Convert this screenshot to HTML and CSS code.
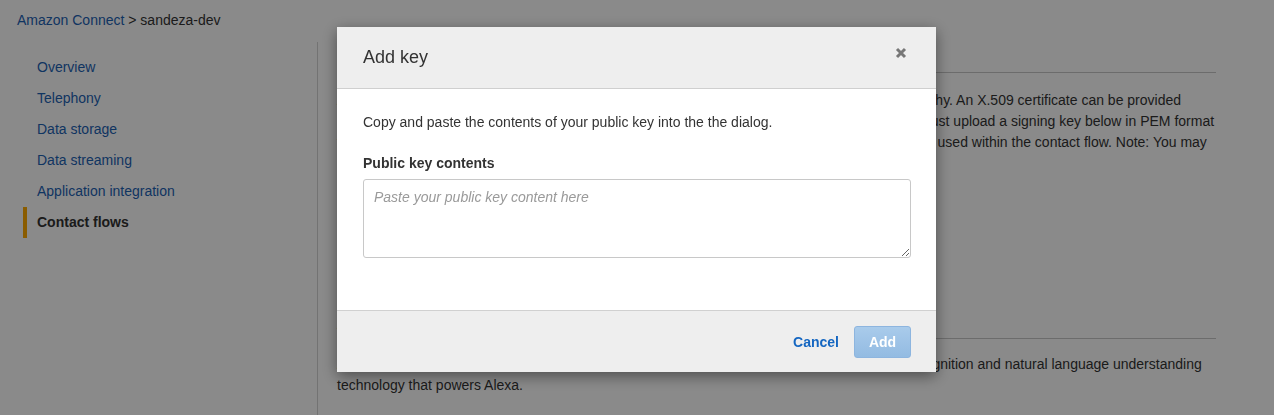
FILE: index.html
```html
<!DOCTYPE html>
<html lang="en">
<head>
<meta charset="utf-8">
<title>Contact flows - Amazon Connect</title>
<link rel="stylesheet" href="styles.css">
</head>
<body>
<div class="page">
  <div class="breadcrumb"><a href="#" class="link">Amazon Connect</a> &gt; sandeza-dev</div>
  <div class="layout">
    <nav class="sidebar">
      <ul class="nav">
        <li class="nav-item"><a href="#" class="link">Overview</a></li>
        <li class="nav-item"><a href="#" class="link">Telephony</a></li>
        <li class="nav-item"><a href="#" class="link">Data storage</a></li>
        <li class="nav-item"><a href="#" class="link">Data streaming</a></li>
        <li class="nav-item"><a href="#" class="link">Application integration</a></li>
        <li class="nav-item active">Contact flows</li>
      </ul>
    </nav>
    <main class="main">
      <h2 class="section-title">Contact flow security keys</h2>
      <p class="para para-first">Amazon Connect may encrypt sensitive customer inputs using asymmetric public-key crypto<span>graphy. An X.509 certificate can be provided</span><br>by Amazon Connect to encrypt sensitive customer data collected in the contact flow. You then mu<span>st upload a signing key below in PEM format</span><br>to enable encryption and decryption. The key ID of the uploaded signing key can then be directly <span>used within the contact flow. Note: You may</span></p>
      <div class="keys">
        <button class="btn-secondary">Add key</button>
        <div class="key-table">
          <div class="key-row head"><span>Key ID</span><span>Created</span></div>
          <div class="key-row"><span>No keys</span><span></span></div>
        </div>
      </div>
      <h2 class="section-title">Amazon Lex</h2>
      <p class="para">Amazon Lex enables you to build chatbots using the same deep learning automatic speech recog<span>nition and natural language understanding</span><br>technology that powers Alexa.</p>
    </main>
  </div>
</div>

<div class="overlay"></div>

<div class="modal" role="dialog" aria-labelledby="modal-title">
  <div class="modal-header">
    <h3 class="modal-title" id="modal-title">Add key</h3>
    <button class="close" aria-label="Close">
      <svg width="12" height="12" viewBox="0 0 12 12"><path d="M2 2 L10 10 M10 2 L2 10" stroke="#777" stroke-width="3" stroke-linecap="butt" fill="none"/></svg>
    </button>
  </div>
  <div class="modal-body">
    <p class="intro">Copy and paste the contents of your public key into the the dialog.</p>
    <label class="field-label" for="keytext">Public key contents</label>
    <textarea id="keytext" class="textarea" placeholder="Paste your public key content here"></textarea>
  </div>
  <div class="modal-footer">
    <a href="#" class="cancel">Cancel</a>
    <button class="btn-primary">Add</button>
  </div>
</div>
</body>
</html>
```
FILE: styles.css
```css
* { box-sizing: border-box; }
html, body { margin: 0; padding: 0; }
body {
  font-family: "Liberation Sans", Arial, Helvetica, sans-serif;
  font-size: 14px;
  color: #333;
  background: #fff;
  overflow: hidden;
}
.link { color: #1d62b4; text-decoration: none; }

.breadcrumb {
  padding: 10px 17px;
  line-height: 20px;
  height: 42px;
}

.layout {
  display: flex;
  min-height: calc(100vh - 42px);
}
.sidebar {
  width: 318px;
  flex: none;
  border-right: 1px solid #d4d4d4;
  padding-top: 10px;
}
.nav { list-style: none; margin: 0; padding: 0 0 0 23px; }
.nav-item {
  line-height: 31px;
  height: 31px;
  padding-left: 10px;
  border-left: 4px solid transparent;
}
.nav-item.active {
  border-left-color: #ffaa00;
  font-weight: bold;
  color: #333;
}

.main {
  flex: 1;
  padding: 0 58px 0 19px;
}
.section-title {
  margin: 0;
  font-size: 18px;
  font-weight: normal;
  line-height: 22px;
  padding: 4px 0 4px;
  border-bottom: 1px solid #c8c8c8;
}
.para {
  margin: 15px 0 0;
  line-height: 21px;
  white-space: nowrap;
}
.para-first { margin-top: 17px; }
.keys { margin: 20px 0 25px; height: 110px; }
.btn-secondary {
  font: inherit;
  height: 32px;
  padding: 0 16px;
  border: 1px solid #ccc;
  background: #f5f5f5;
  border-radius: 3px;
}
.key-table { margin-top: 12px; }
.key-row {
  display: flex;
  height: 33px;
  line-height: 33px;
}
.key-row span { width: 300px; }
.key-row.head { font-weight: bold; }

.overlay {
  position: fixed;
  inset: 0;
  background: rgba(0, 0, 0, 0.46);
}

.modal {
  position: fixed;
  left: 337px;
  top: 27px;
  width: 599px;
  background: #fff;
  box-shadow: 0 4px 14px rgba(0, 0, 0, 0.45);
}
.modal-header {
  height: 62px;
  background: #eee;
  border-bottom: 1px solid #cfcfcf;
  display: flex;
  justify-content: space-between;
  padding: 0 29px 0 26px;
}
.modal-title {
  margin: 0;
  font-size: 18px;
  font-weight: normal;
  line-height: 61px;
  color: #333;
}
.close {
  border: 0;
  background: none;
  padding: 0;
  margin-top: 20px;
  width: 12px;
  height: 12px;
  align-self: flex-start;
  display: flex;
}
.modal-body {
  padding: 23px 25px 52px 26px;
}
.intro { margin: 0; line-height: 20px; color: #333; }
.field-label {
  display: block;
  margin-top: 21px;
  font-weight: bold;
  line-height: 20px;
  color: #333;
}
.textarea {
  display: block;
  margin-top: 6px;
  width: 548px;
  height: 79px;
  border: 1px solid #c8c8c8;
  border-radius: 3px;
  padding: 7px 10px;
  font: italic 14px/20px "Liberation Sans", Arial, sans-serif;
  color: #333;
  resize: vertical;
}
.textarea::placeholder { color: #9a9a9a; font-style: italic; }
.modal-footer {
  height: 62px;
  background: #eee;
  border-top: 1px solid #d0d0d0;
  display: flex;
  justify-content: flex-end;
  align-items: center;
  padding: 0 25px;
}
.cancel {
  color: #1466c1;
  font-weight: bold;
  text-decoration: none;
  margin-right: 15px;
}
.btn-primary {
  font: bold 14px "Liberation Sans", Arial, sans-serif;
  color: #fff;
  width: 57px;
  height: 32px;
  border: 1px solid #8db5df;
  border-radius: 3px;
  background: linear-gradient(#a9cbeb, #93bbe2);
}
```
